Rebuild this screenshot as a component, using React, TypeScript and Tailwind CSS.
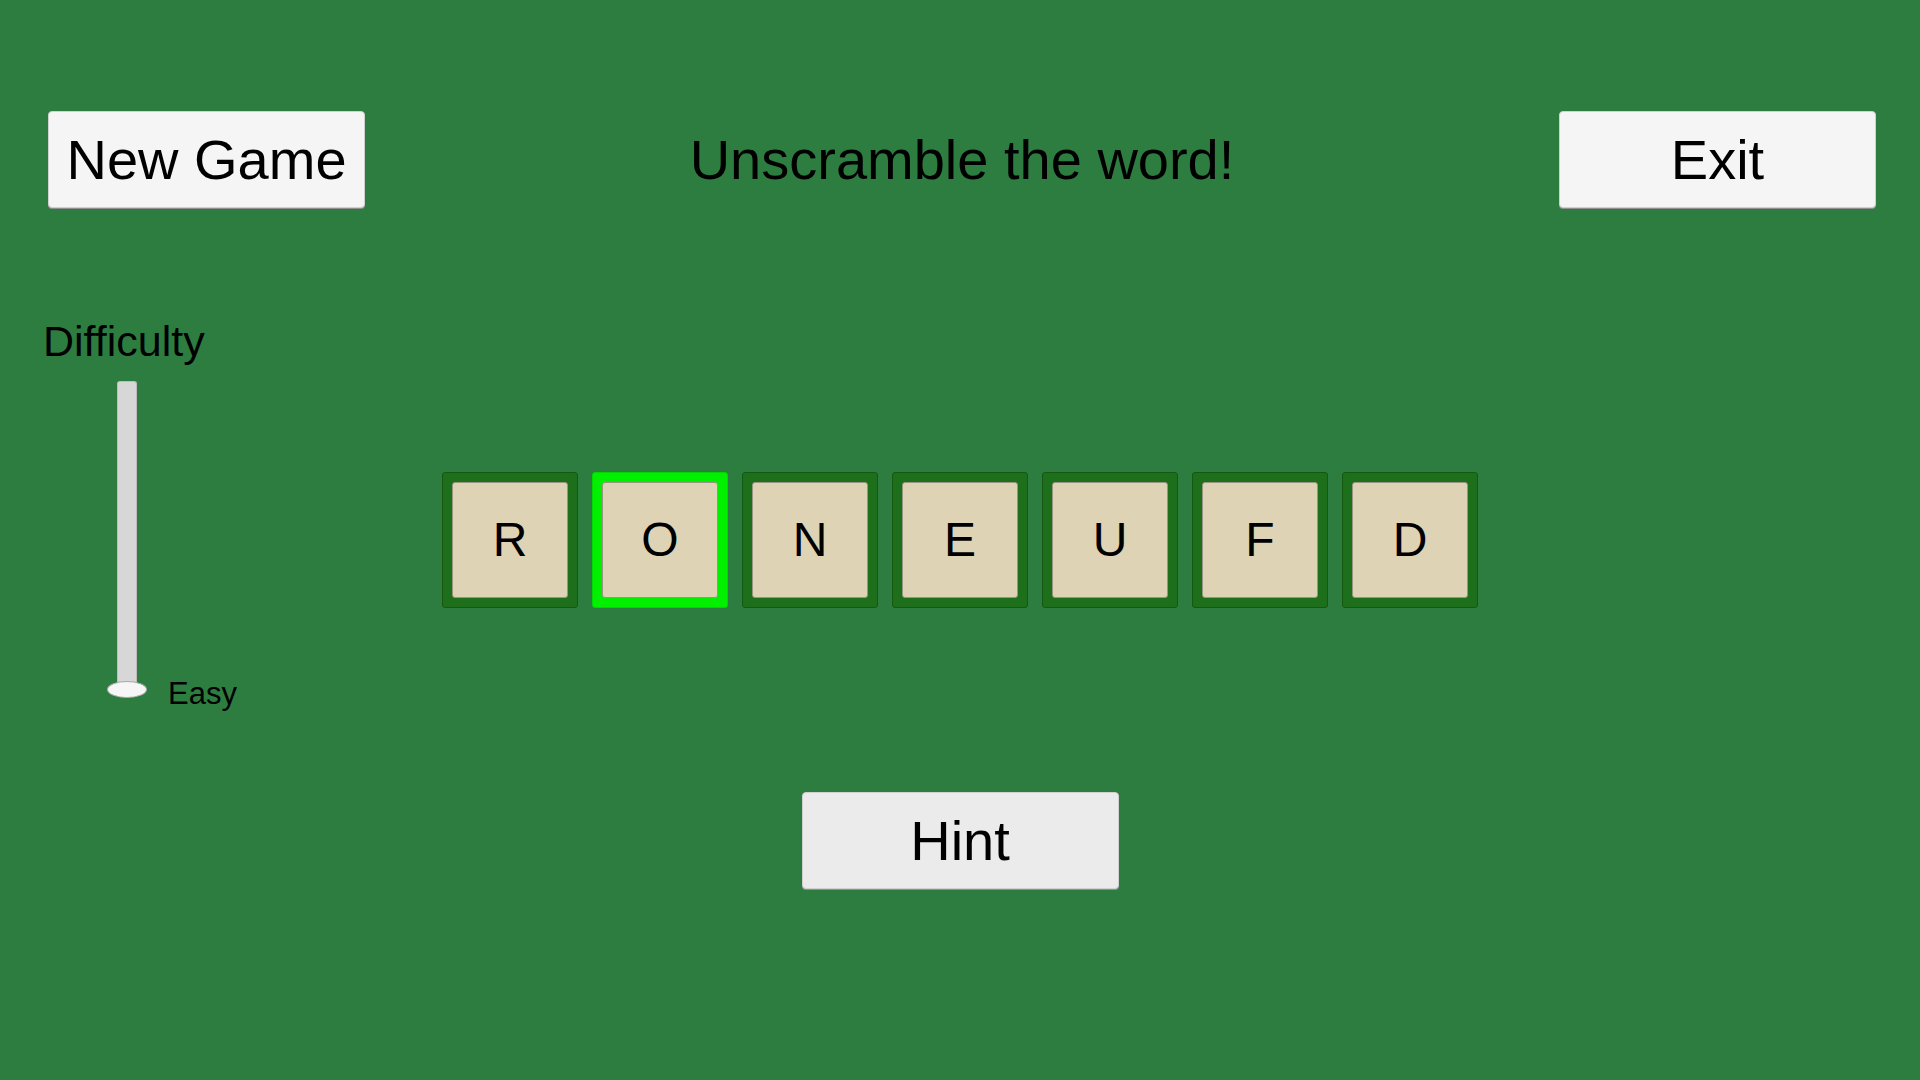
import React, { useState } from "react";

const letters = ["R", "O", "N", "E", "U", "F", "D"];

const font = { fontFamily: '"Liberation Sans", Arial, sans-serif' };

interface MenuButtonProps {
  label: string;
  muted?: boolean;
}

const MenuButton: React.FC<MenuButtonProps> = ({ label, muted }) => {
  return (
    <button
      className={`w-[317px] h-[97px] rounded-[4px] border border-[#d0d0d0] shadow-[0_1px_0_#8f8f8f] text-[56px] leading-none text-black flex items-center justify-center ${
        muted ? "bg-[#ebebeb]" : "bg-[#f5f5f5]"
      }`}
    >
      {label}
    </button>
  );
};

interface TileProps {
  letter: string;
  selected?: boolean;
  onClick: () => void;
}

const Tile: React.FC<TileProps> = ({ letter, selected, onClick }) => {
  return (
    <div
      onClick={onClick}
      className={`w-[136px] h-[136px] rounded-[3px] border p-[9px] cursor-pointer ${
        selected ? "bg-[#00f000] border-[#00d800]" : "bg-[#1e6f1b] border-[#145812]"
      }`}
    >
      <div className="w-full h-full rounded-[3px] border border-[#9a9482] bg-[#ded3b4] flex items-center justify-center text-[48px] leading-none text-black">
        {letter}
      </div>
    </div>
  );
};

const App: React.FC = () => {
  const [selected, setSelected] = useState(1);

  return (
    <div style={font} className="w-screen h-screen overflow-hidden bg-[#2e7d40] flex flex-col pt-[111px]">
      {/* top bar */}
      <div className="flex items-center pl-[48px] pr-[44px]">
        <MenuButton label="New Game" />
        <div className="flex-1 text-center text-[56px] leading-none text-black">
          Unscramble the word!
        </div>
        <MenuButton label="Exit" />
      </div>

      <div className="grid grid-cols-[1fr_auto_1fr] mt-[112px]">
        {/* difficulty slider */}
        <div className="pl-[43px] flex flex-col">
          <div className="text-[43px] leading-none text-black">Difficulty</div>
          <div className="flex items-end mt-[18px] ml-[64px]">
            <div className="relative w-[40px] h-[317px]">
              <div className="mx-auto w-[20px] h-[307px] rounded-t-[3px] bg-[#d7d7d7] border-x border-t border-[#bdbdbd]" />
              <div className="absolute left-0 bottom-0 w-[40px] h-[17px] rounded-[50%] bg-[#f6f6f6] border border-[#a8a8a8]" />
            </div>
            <div className="ml-[21px] -mb-[11px] text-[31px] leading-none text-black">Easy</div>
          </div>
        </div>

        {/* letter tiles + hint */}
        <div className="flex flex-col items-center">
          <div className="flex gap-[14px] mt-[152px]">
            {letters.map((l, i) => (
              <Tile key={i} letter={l} selected={i === selected} onClick={() => setSelected(i)} />
            ))}
          </div>
          <div className="mt-[184px]">
            <MenuButton label="Hint" muted />
          </div>
        </div>

        <div />
      </div>
    </div>
  );
};

export default App;
